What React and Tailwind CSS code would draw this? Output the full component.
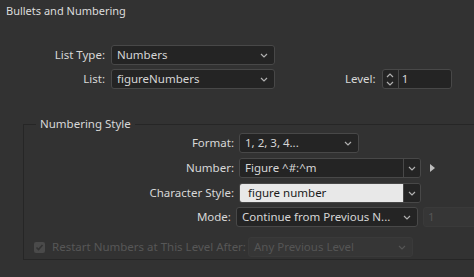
import React from 'react'

function Chevron({ className = '' }) {
  return (
    <svg className={className} width="8" height="5" viewBox="0 0 8 5" fill="none" stroke="currentColor" strokeWidth="1.2">
      <path d="M1 1l3 3 3-3" />
    </svg>
  )
}

function Select({ value, width, disabled = false }) {
  return (
    <div
      className={`flex items-center justify-between h-[20px] rounded-[3px] border pl-[5px] pr-[6px] ${
        disabled ? 'border-[#3a3a3a] bg-[#363636] text-[#555]' : 'border-[#484848] bg-[#242424] text-[#d6d6d6]'
      } ${width}`}
    >
      <span className="whitespace-nowrap leading-[16px]">{value}</span>
      <Chevron className={disabled ? 'text-[#555]' : 'text-[#b0b0b0]'} />
    </div>
  )
}

function Combo({ value, light = false }) {
  return (
    <div className="flex h-[20px] w-[182px] rounded-[3px] border border-[#484848] overflow-hidden">
      <div className={`flex-1 flex items-center ${light ? 'bg-[#e8e8e8] text-[#1a1a1a] pl-[8px]' : 'bg-[#242424] text-[#d6d6d6] pl-[5px]'}`}>
        <span className="whitespace-nowrap leading-[16px]">{value}</span>
      </div>
      <div className="w-[17px] flex items-center justify-center bg-[#242424] border-l border-[#484848] text-[#b0b0b0]">
        <Chevron />
      </div>
    </div>
  )
}

export default function App() {
  return (
    <div
      className="w-[474px] h-[277px] bg-[#323232] text-[#d8d8d8] text-[11.5px] overflow-hidden"
      style={{ fontFamily: '"Noto Sans", "Open Sans", sans-serif' }}
    >
      {/* title */}
      <div className="pl-[6px] pt-[3px] h-[45px] text-[11px] text-[#dcdcdc]">Bullets and Numbering</div>

      {/* list rows */}
      <div className="flex items-center h-[20px]">
        <div className="w-[106px] text-right pr-[1px]">List Type:</div>
        <div className="ml-[5px]">
          <Select value="Numbers" width="w-[164px]" />
        </div>
      </div>
      <div className="flex items-center h-[20px] mt-[4px]">
        <div className="w-[106px] text-right pr-[1px]">List:</div>
        <div className="ml-[5px]">
          <Select value="figureNumbers" width="w-[164px]" />
        </div>
        <div className="ml-[70px]">Level:</div>
        <div className="ml-[6px] flex h-[20px] w-[70px] rounded-[3px] border border-[#484848] bg-[#242424] overflow-hidden">
          <div className="w-[16px] flex flex-col items-center justify-center gap-[3px] border-r border-[#484848] text-[#b0b0b0]">
            <svg width="8" height="5" viewBox="0 0 8 5" fill="none" stroke="currentColor" strokeWidth="1.2">
              <path d="M1 4l3-3 3 3" />
            </svg>
            <Chevron />
          </div>
          <div className="flex items-center pl-[3px] text-[#d6d6d6]">1</div>
        </div>
      </div>

      {/* numbering style group */}
      <div className="relative ml-[23px] mt-[35px] w-[470px] h-[136px] border border-[#262626]">
        <div className="absolute left-[12px] -top-[9px] px-[4px] bg-[#323232] leading-[16px]">Numbering Style</div>

        <div className="flex flex-col pt-[8px]">
          <div className="flex items-center h-[20px]">
            <div className="w-[210px] text-right">Format:</div>
            <div className="ml-[5px]">
              <Select value="1, 2, 3, 4..." width="w-[120px]" />
            </div>
          </div>
          <div className="flex items-center h-[20px] mt-[5px]">
            <div className="w-[210px] text-right">Number:</div>
            <div className="ml-[5px]">
              <Combo value="Figure ^#:^m" />
            </div>
            <svg className="ml-[9px] text-[#bdbdbd]" width="5" height="8" viewBox="0 0 5 8" fill="currentColor">
              <path d="M0 0l5 4-5 4z" />
            </svg>
          </div>
          <div className="flex items-center h-[20px] mt-[5px]">
            <div className="w-[210px] text-right">Character Style:</div>
            <div className="ml-[5px]">
              <Combo value="figure number" light />
            </div>
          </div>
          <div className="flex items-center h-[20px] mt-[4px]">
            <div className="w-[210px] text-right">Mode:</div>
            <div className="ml-[5px]">
              <Select value="Continue from Previous N..." width="w-[182px]" />
            </div>
            <div className="ml-[5px] h-[20px] w-[70px] flex items-center pl-[4px] rounded-[3px] border border-[#3a3a3a] bg-[#363636] text-[#555]">1</div>
          </div>
          <div className="flex items-center h-[20px] mt-[10px]">
            <div className="ml-[10px] w-[11px] h-[11px] rounded-[2px] bg-[#4a4a4a] flex items-center justify-center">
              <svg width="9" height="9" viewBox="0 0 9 9" fill="none" stroke="#323232" strokeWidth="1.6">
                <path d="M1.5 4.5l2 2 4-4.5" />
              </svg>
            </div>
            <div className="ml-[7px] w-[196px] whitespace-nowrap text-[#575757]">Restart Numbers at This Level After:</div>
            <div>
              <Select value="Any Previous Level" width="w-[165px]" disabled />
            </div>
          </div>
        </div>
      </div>
    </div>
  )
}
